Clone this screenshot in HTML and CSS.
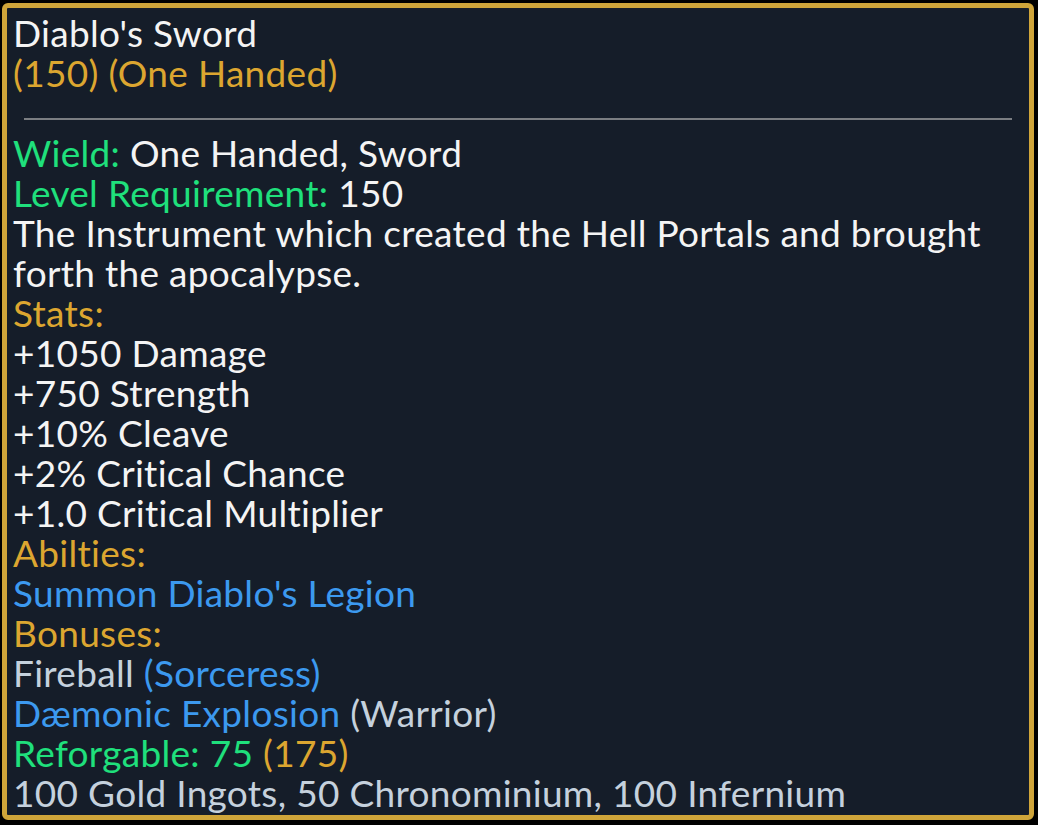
FILE: index.html
```html
<!DOCTYPE html>
<html lang="en">
<head>
    <meta charset="UTF-8">
    <meta name="viewport" content="width=device-width, initial-scale=1.0">
    <title>Diablo's Sword</title>
    <link rel="stylesheet" href="styles.css">
</head>
<body>

<div class="tooltip">
    <div class="header">
        <div class="line name">Diablo's Sword</div>
        <div class="line gold">(150) (One Handed)</div>
    </div>

    <hr class="divider">

    <div class="body">
        <div class="line"><span class="green">Wield:</span> One Handed, Sword</div>
        <div class="line"><span class="green">Level Requirement:</span> 150</div>
        <div class="line">The Instrument which created the Hell Portals and brought forth the apocalypse.</div>

        <div class="line gold">Stats:</div>
        <div class="line">+1050 Damage</div>
        <div class="line">+750 Strength</div>
        <div class="line">+10% Cleave</div>
        <div class="line">+2% Critical Chance</div>
        <div class="line">+1.0 Critical Multiplier</div>

        <div class="line gold">Abilties:</div>
        <div class="line blue">Summon Diablo's Legion</div>

        <div class="line gold">Bonuses:</div>
        <div class="line muted">Fireball <span class="blue">(Sorceress)</span></div>
        <div class="line muted"><span class="blue">Dæmonic Explosion</span> (Warrior)</div>

        <div class="line green">Reforgable: 75 <span class="gold">(175)</span></div>
        <div class="line muted">100 Gold Ingots, 50 Chronominium, 100 Infernium</div>
    </div>
</div>

</body>
</html>
```

FILE: styles.css
```css
body {
    margin: 0;
    background-color: #000;
    font-family: Lato, "Open Sans", sans-serif;
}
.tooltip {
    box-sizing: border-box;
    width: 1032px;
    height: 817px;
    margin: 3px 0 0 2px;
    border: 5px solid #cfa53a;
    border-radius: 6px;
    background-color: #151d29;
    padding: 5px 10px 0 6px;
    color: #f4f4f4;
    font-size: 37px;
    letter-spacing: 0.3px;
    line-height: 40px;
}
.divider {
    border: none;
    height: 2px;
    background-color: #7b7e82;
    margin: 25px 7px 13px 11px;
}
.gold {
    color: #dca630;
}
.green {
    color: #1fe07c;
}
.blue {
    color: #3c99ef;
}
.muted {
    color: #c5d1dd;
}
```
